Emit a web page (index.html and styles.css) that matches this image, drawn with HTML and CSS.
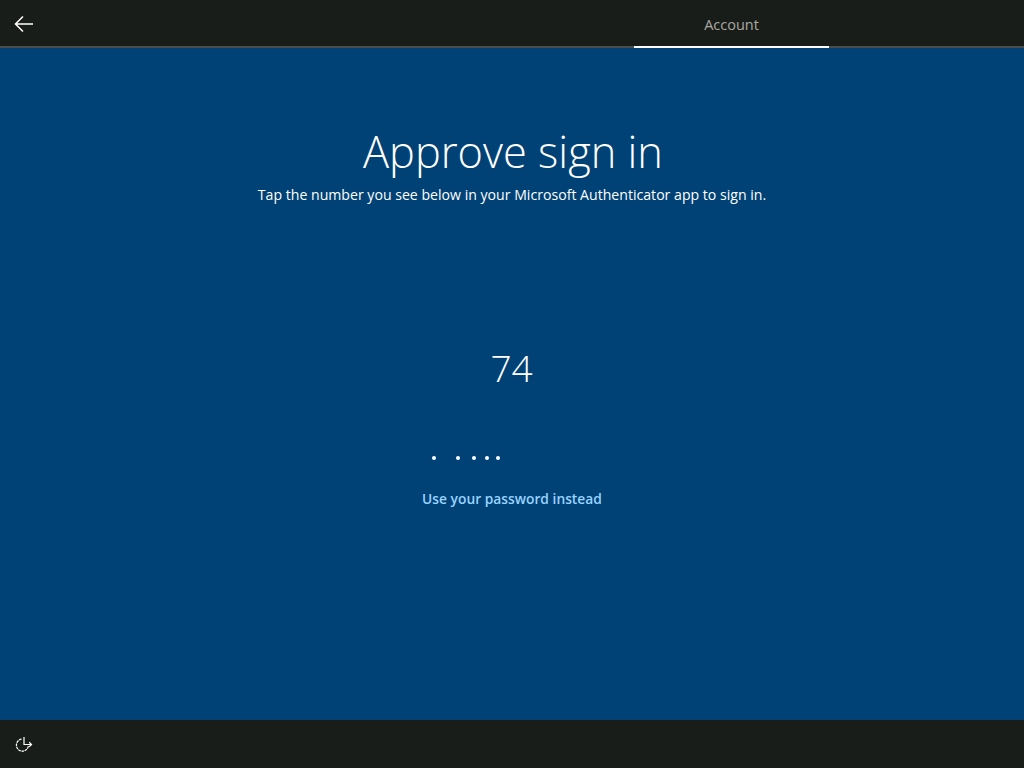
FILE: index.html
```html
<!DOCTYPE html>
<html lang="en">
<head>
<meta charset="utf-8">
<title>Approve sign in</title>
<link rel="stylesheet" href="styles.css">
</head>
<body>
<div class="screen">
  <header class="topbar">
    <button class="back" aria-label="Back">
      <svg width="20" height="16" viewBox="0 0 20 16"><path d="M9 .5 1.500 8 9 15.500M1.500 8H19" fill="none" stroke="#fff" stroke-width="1.500"/></svg>
    </button>
    <div class="tab">Account</div>
  </header>
  <main class="content">
    <h1 class="title">Approve sign in</h1>
    <p class="sub">Tap the number you see below in your Microsoft Authenticator app to sign in.</p>
    <div class="number">74</div>
    <div class="dots">
      <span class="dot d1"></span><span class="dot d2"></span><span class="dot d3"></span><span class="dot d4"></span><span class="dot"></span>
    </div>
    <a class="link" href="#">Use your password instead</a>
  </main>
  <footer class="bottombar">
    <svg class="power" width="20" height="18" viewBox="0 0 20 18"><path d="M6.500 3.200A6 6 0 1 0 13.400 9.500" fill="none" stroke="#fff" stroke-width="1.200" stroke-dasharray="2.600 .7"/><path d="M9 1v7.500H16.500M14.200 6.300 16.500 8.500 14.200 10.700" fill="none" stroke="#fff" stroke-width="1.200"/></svg>
  </footer>
</div>
</body>
</html>
```
FILE: styles.css
```css
html, body { margin: 0; height: 100%; }
body { font-family: "Open Sans", "Liberation Sans", sans-serif; color: #fff; background: #004275; }
.screen { width: 1024px; height: 768px; display: flex; flex-direction: column; overflow: hidden; }
.topbar { height: 46px; flex: none; display: flex; justify-content: space-between; background: #191d19; border-bottom: 2px solid #4a4c4a; }
.back { width: 48px; height: 46px; padding: 2px 0 0; border: 0; background: none; display: flex; align-items: center; justify-content: center; }
.tab { width: 195px; height: 48px; box-sizing: border-box; margin-right: 195px; display: flex; align-items: center; justify-content: center; padding-top: 2px; font-size: 14.500px; color: #a9a9a4; border-bottom: 2px solid #fff; }
.content { flex: 1; display: flex; flex-direction: column; align-items: center; padding-top: 76px; }
.title { margin: 0 0 0 2px; font-size: 43.400px; line-height: 56px; font-weight: 300; }
.sub { margin: 5px 0 0; font-size: 14.120px; line-height: 20px; }
.number { margin: 138px 1px 0 0; font-size: 37px; line-height: 50px; font-weight: 300; }
.dots { width: 160px; margin-top: 63px; height: 4px; display: flex; box-sizing: border-box; }
.dot { width: 4px; height: 4px; border-radius: 50%; background: #fff; flex: none; }
.d1 { margin-right: 20px; }
.d2 { margin-right: 12px; }
.d3 { margin-right: 9px; }
.d4 { margin-right: 7px; }
.link { margin-top: 29px; font-size: 13.800px; line-height: 20px; font-weight: 600; color: #99d3ff; text-decoration: none; }
.bottombar { height: 48px; flex: none; background: #191d19; display: flex; align-items: center; padding-left: 15px; }
.power { margin-top: 2px; }
```
